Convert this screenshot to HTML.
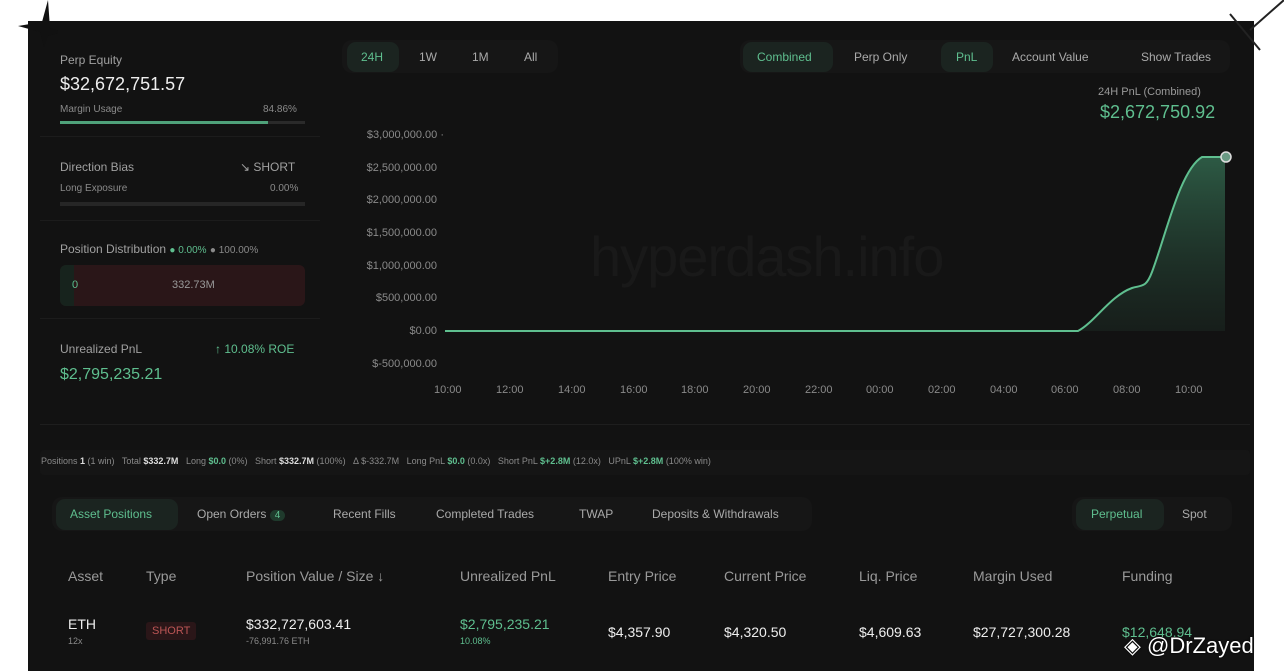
<!DOCTYPE html>
<html><head><meta charset="utf-8"><style>
*{margin:0;padding:0;box-sizing:border-box}
body{width:1284px;height:671px;background:#fff;font-family:"Liberation Sans",sans-serif;position:relative;overflow:hidden;color:#d8d8d8}
.panel{position:absolute;left:28px;top:21px;width:1226px;height:650px;background:#121212}
.a{position:absolute;white-space:nowrap}
.g{color:#5fbf8f}
.m{color:#8a8a8a}
.pill{position:absolute;border-radius:9px;background:#1b2420}
.grp{position:absolute;border-radius:10px;background:#161616}
.yl{position:absolute;right:847px;font-size:11px;color:#8a8a8a;text-align:right}
.xl{position:absolute;top:384px;font-size:11px;color:#8a8a8a}
.th{position:absolute;top:568px;font-size:14px;color:#9a9a9a}
</style></head><body>
<div class="panel"></div>
<svg class="a" style="left:8px;top:0" width="50" height="50"><path d="M40 0 L42 28 L56 32 L40 36 L36 48 L32 32 L10 26 L34 22Z" fill="#111"/></svg>
<svg class="a" style="left:1210px;top:0" width="74" height="60"><path d="M40 30 L74 0 M20 14 L50 50" stroke="#222" stroke-width="2"/></svg>
<div class="a" style="left:40px;top:424px;width:1210px;height:1px;background:#1e1e1e"></div>

<div class="a m" style="left:60px;top:53px;font-size:12px;color:#a0a0a0">Perp Equity</div>
<div class="a" style="left:60px;top:74px;font-size:18px;color:#eee">$32,672,751.57</div>
<div class="a m" style="left:60px;top:104px;font-size:10px">Margin Usage</div>
<div class="a m" style="left:263px;top:104px;font-size:10px">84.86%</div>
<div class="a" style="left:60px;top:121px;width:245px;height:3px;background:#2a2a2a"></div>
<div class="a" style="left:60px;top:121px;width:208px;height:3px;background:#4fa27a"></div>
<div class="a" style="left:40px;top:136px;width:280px;height:1px;background:#1c1c1c"></div>
<div class="a" style="left:60px;top:160px;font-size:12px;color:#a0a0a0">Direction Bias</div>
<div class="a" style="left:240px;top:160px;font-size:12px;color:#a0a0a0">↘ SHORT</div>
<div class="a m" style="left:60px;top:183px;font-size:10px">Long Exposure</div>
<div class="a m" style="left:270px;top:183px;font-size:10px">0.00%</div>
<div class="a" style="left:60px;top:202px;width:245px;height:4px;background:#262626"></div>
<div class="a" style="left:40px;top:220px;width:280px;height:1px;background:#1c1c1c"></div>
<div class="a" style="left:60px;top:242px;font-size:12px;color:#a0a0a0">Position Distribution <span class="g" style="font-size:10px">● 0.00%</span> <span class="m" style="font-size:10px">● 100.00%</span></div>
<div class="a" style="left:60px;top:265px;width:245px;height:41px;border-radius:6px;background:#2a1618"></div>
<div class="a" style="left:60px;top:265px;width:14px;height:41px;border-radius:6px 0 0 6px;background:#17231d"></div>
<div class="a g" style="left:72px;top:279px;font-size:11px">0</div>
<div class="a" style="left:172px;top:279px;font-size:11px;color:#999">332.73M</div>
<div class="a" style="left:40px;top:318px;width:280px;height:1px;background:#1c1c1c"></div>
<div class="a" style="left:60px;top:342px;font-size:12px;color:#a0a0a0">Unrealized PnL</div>
<div class="a g" style="left:215px;top:342px;font-size:12px">↑ 10.08% ROE</div>
<div class="a g" style="left:60px;top:366px;font-size:16px">$2,795,235.21</div>

<div class="grp" style="left:342px;top:40px;width:216px;height:33px"></div>
<div class="pill" style="left:347px;top:42px;width:52px;height:30px"></div>
<div class="a g" style="left:361px;top:50px;font-size:12px">24H</div>
<div class="a" style="left:419px;top:50px;font-size:12px;color:#aaa">1W</div>
<div class="a" style="left:472px;top:50px;font-size:12px;color:#aaa">1M</div>
<div class="a" style="left:524px;top:50px;font-size:12px;color:#aaa">All</div>

<div class="grp" style="left:740px;top:40px;width:490px;height:33px"></div>
<div class="pill" style="left:743px;top:42px;width:90px;height:30px"></div>
<div class="a g" style="left:757px;top:50px;font-size:12px">Combined</div>
<div class="a" style="left:854px;top:50px;font-size:12px;color:#aaa">Perp Only</div>
<div class="pill" style="left:941px;top:42px;width:52px;height:30px"></div>
<div class="a g" style="left:956px;top:50px;font-size:12px">PnL</div>
<div class="a" style="left:1012px;top:50px;font-size:12px;color:#aaa">Account Value</div>
<div class="a" style="left:1141px;top:50px;font-size:12px;color:#aaa">Show Trades</div>
<div class="a" style="left:1098px;top:86px;font-size:11px;color:#999">24H PnL (Combined)</div>
<div class="a g" style="left:1100px;top:102px;font-size:18px">$2,672,750.92</div>

<div class="a" style="left:590px;top:224px;font-size:56px;color:#191919;letter-spacing:-1px">hyperdash.info</div>

<div class="yl" style="top:129px;right:840px">$3,000,000.00 ·</div>
<div class="yl" style="top:162px">$2,500,000.00</div>
<div class="yl" style="top:194px">$2,000,000.00</div>
<div class="yl" style="top:227px">$1,500,000.00</div>
<div class="yl" style="top:260px">$1,000,000.00</div>
<div class="yl" style="top:292px">$500,000.00</div>
<div class="yl" style="top:325px">$0.00</div>
<div class="yl" style="top:358px">$-500,000.00</div>
<div class="xl" style="left:434px">10:00</div><div class="xl" style="left:496px">12:00</div><div class="xl" style="left:558px">14:00</div><div class="xl" style="left:620px">16:00</div><div class="xl" style="left:681px">18:00</div><div class="xl" style="left:743px">20:00</div><div class="xl" style="left:805px">22:00</div><div class="xl" style="left:866px">00:00</div><div class="xl" style="left:928px">02:00</div><div class="xl" style="left:990px">04:00</div><div class="xl" style="left:1051px">06:00</div><div class="xl" style="left:1113px">08:00</div><div class="xl" style="left:1175px">10:00</div>
<svg class="a" style="left:0;top:0" width="1284" height="440">
<defs><linearGradient id="f" x1="0" y1="0" x2="0" y2="1"><stop offset="0" stop-color="#3f8a66" stop-opacity=".6"/><stop offset="1" stop-color="#2a4f3d" stop-opacity=".2"/></linearGradient></defs>
<path d="M1078 331 C1095 322 1110 296 1132 288 C1142 285 1146 288 1152 272 C1166 235 1180 170 1202 157 L1225 157 L1225 331Z" fill="url(#f)"/>
<path d="M445 331 L1078 331 C1095 322 1110 296 1132 288 C1142 285 1146 288 1152 272 C1166 235 1180 170 1202 157 L1225 157" fill="none" stroke="#5fbf8f" stroke-width="2"/>
<circle cx="1226" cy="157" r="5" fill="#6a9a84" stroke="#ddd" stroke-width="1.5"/>
</svg>

<div class="a" style="left:40px;top:450px;width:1210px;height:25px;background:#151515;border-radius:4px"></div>
<div class="a" style="left:41px;top:456px;font-size:9px;color:#8a8a8a">Positions <b style="color:#ddd">1</b> (1 win) &nbsp; Total <b style="color:#ddd">$332.7M</b> &nbsp; Long <b style="color:#5fbf8f">$0.0</b> (0%) &nbsp; Short <b style="color:#ddd">$332.7M</b> (100%) &nbsp; Δ $-332.7M &nbsp; Long PnL <b style="color:#5fbf8f">$0.0</b> (0.0x) &nbsp; Short PnL <b style="color:#5fbf8f">$+2.8M</b> (12.0x) &nbsp; UPnL <b style="color:#5fbf8f">$+2.8M</b> (100% win)</div>

<div class="grp" style="left:52px;top:497px;width:760px;height:34px"></div>
<div class="pill" style="left:56px;top:499px;width:122px;height:31px"></div>
<div class="a g" style="left:70px;top:507px;font-size:12px">Asset Positions</div>
<div class="a" style="left:197px;top:507px;font-size:12px;color:#aaa">Open Orders <span style="display:inline-block;background:#1f3a2c;color:#5fbf8f;border-radius:8px;padding:0 5px;font-size:10px">4</span></div>
<div class="a" style="left:333px;top:507px;font-size:12px;color:#aaa">Recent Fills</div>
<div class="a" style="left:436px;top:507px;font-size:12px;color:#aaa">Completed Trades</div>
<div class="a" style="left:579px;top:507px;font-size:12px;color:#aaa">TWAP</div>
<div class="a" style="left:652px;top:507px;font-size:12px;color:#aaa">Deposits &amp; Withdrawals</div>
<div class="grp" style="left:1072px;top:497px;width:160px;height:34px"></div>
<div class="pill" style="left:1076px;top:499px;width:88px;height:31px"></div>
<div class="a g" style="left:1091px;top:507px;font-size:12px">Perpetual</div>
<div class="a" style="left:1182px;top:507px;font-size:12px;color:#aaa">Spot</div>

<div class="th" style="left:68px">Asset</div><div class="th" style="left:146px">Type</div><div class="th" style="left:246px">Position Value / Size ↓</div><div class="th" style="left:460px">Unrealized PnL</div><div class="th" style="left:608px">Entry Price</div><div class="th" style="left:724px">Current Price</div><div class="th" style="left:859px">Liq. Price</div><div class="th" style="left:973px">Margin Used</div><div class="th" style="left:1122px">Funding</div>
<div class="a" style="left:68px;top:616px;font-size:14px;color:#eee">ETH</div>
<div class="a m" style="left:68px;top:636px;font-size:9px">12x</div>
<div class="a" style="left:146px;top:622px;font-size:11px;color:#b55;background:#2a1618;padding:3px 6px;border-radius:3px">SHORT</div>
<div class="a" style="left:246px;top:616px;font-size:14px;color:#eee">$332,727,603.41</div>
<div class="a m" style="left:246px;top:636px;font-size:9px">-76,991.76 ETH</div>
<div class="a g" style="left:460px;top:616px;font-size:14px">$2,795,235.21</div>
<div class="a g" style="left:460px;top:636px;font-size:9px">10.08%</div>
<div class="a" style="left:608px;top:624px;font-size:14px;color:#eee">$4,357.90</div>
<div class="a" style="left:724px;top:624px;font-size:14px;color:#eee">$4,320.50</div>
<div class="a" style="left:859px;top:624px;font-size:14px;color:#eee">$4,609.63</div>
<div class="a" style="left:973px;top:624px;font-size:14px;color:#eee">$27,727,300.28</div>
<div class="a g" style="left:1122px;top:624px;font-size:14px">$12,648.94</div>
<div class="a" style="left:1124px;top:633px;font-size:22px;color:#fff;text-shadow:0 0 2px #000">◈ @DrZayed</div>
</body></html>
